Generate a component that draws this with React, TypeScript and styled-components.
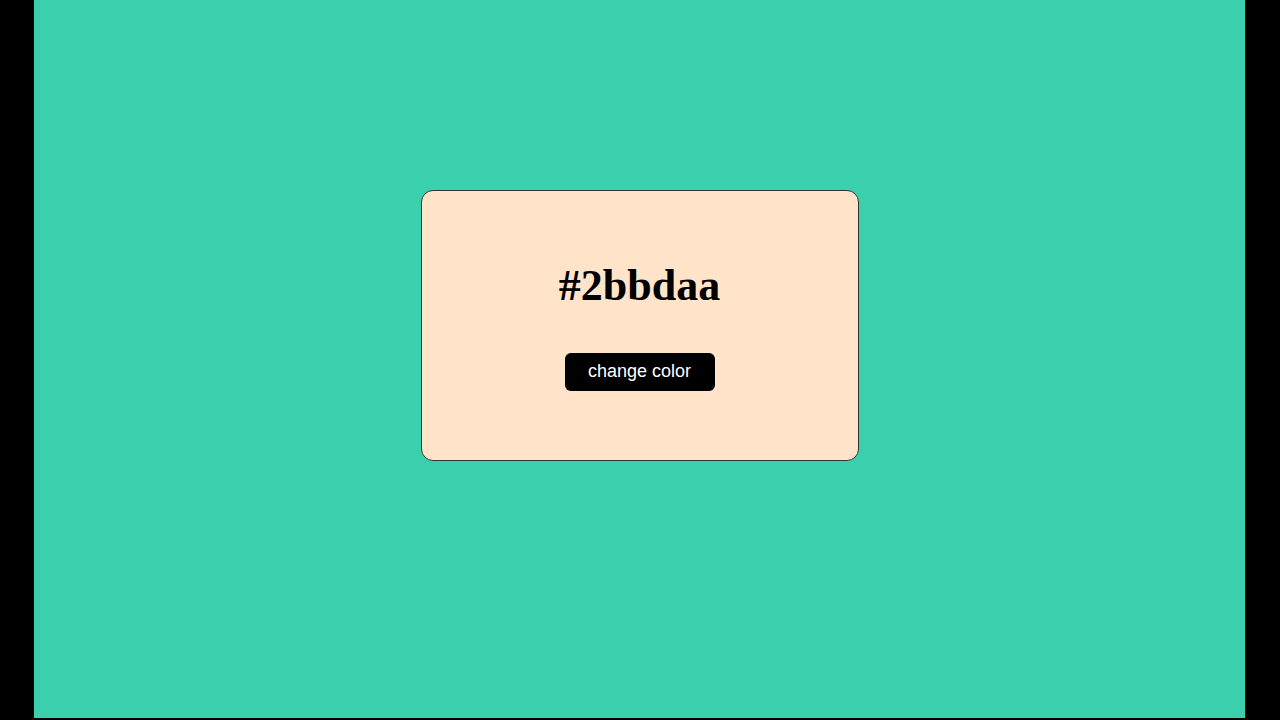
import React, { useState } from "react";
import styled, { createGlobalStyle } from "styled-components";

const Global = createGlobalStyle`
  html, body { margin: 0; padding: 0; background: #000; }
  #root { height: 720px; }
`;

const Frame = styled.div`
  height: 720px;
  display: flex;
  justify-content: center;
  background: #000;
`;

const Stage = styled.main<{ $bg: string }>`
  width: 1211px;
  height: 718px;
  margin-left: 34px;
  margin-right: 35px;
  background: ${(p) => p.$bg};
  display: flex;
  justify-content: center;
  align-items: flex-start;
  padding-top: 190px;
  box-sizing: border-box;
`;

const Card = styled.section`
  width: 438px;
  height: 271px;
  box-sizing: border-box;
  background: #ffe4ca;
  border: 1px solid #333;
  border-radius: 12px;
  display: flex;
  flex-direction: column;
  align-items: center;
  justify-content: center;
  gap: 42px;
`;

const Heading = styled.h1`
  margin: 0;
  font-family: "Liberation Serif", "Times New Roman", serif;
  font-weight: bold;
  font-size: 44px;
  line-height: 50px;
  color: #000;
`;

const Button = styled.button`
  width: 150px;
  height: 38px;
  background: #000;
  color: #fff;
  border: none;
  border-radius: 6px;
  font-family: "Liberation Sans", Arial, sans-serif;
  font-size: 18px;
  cursor: pointer;
`;

export default function App() {
  const [color] = useState("#2bbdaa");
  return (
    <>
      <Global />
      <Frame>
        <Stage $bg="#3acfad">
          <Card>
            <Heading>{color}</Heading>
            <Button>change color</Button>
          </Card>
        </Stage>
      </Frame>
    </>
  );
}
